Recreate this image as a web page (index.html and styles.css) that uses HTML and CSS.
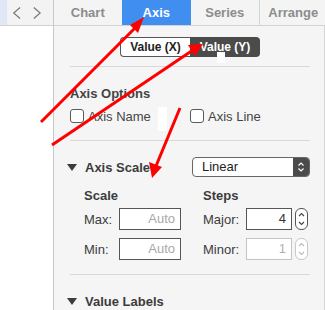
FILE: index.html
```html
<!DOCTYPE html>
<html>
<head>
<meta charset="utf-8">
<link rel="stylesheet" href="styles.css">
</head>
<body>
<div class="app">
  <aside class="sidebar">
    <div class="nav-bar">
      <span class="nav-strip"></span>
      <svg class="nav-btn" width="12" height="14" viewBox="0 0 12 14"><path d="M10 1 L3 7 L10 13" fill="none" stroke="#777" stroke-width="1.3"/></svg>
      <svg class="nav-btn" width="12" height="14" viewBox="0 0 12 14"><path d="M2 1 L9 7 L2 13" fill="none" stroke="#777" stroke-width="1.3"/></svg>
    </div>
  </aside>
  <main class="inspector">
    <nav class="tabs">
      <div class="tab">Chart</div>
      <div class="tab active">Axis</div>
      <div class="tab">Series</div>
      <div class="tab">Arrange</div>
    </nav>
    <div class="content">
      <div class="seg-wrap">
        <div class="segmented">
          <div class="seg seg-on">Value (X)</div>
          <div class="seg seg-off">Value (Y)</div>
        </div>
      </div>
      <div class="section options">
        <div class="heading">Axis Options</div>
        <div class="check-row">
          <label class="check"><span class="box"></span>Axis Name</label>
          <label class="check"><span class="box"></span>Axis Line</label>
        </div>
      </div>
      <div class="section scale">
        <div class="disclosure-row">
          <div class="disclosure"><span class="tri"></span>Axis Scale</div>
          <div class="popup">
            <span class="popup-text">Linear</span>
            <span class="popup-arrows">
              <svg width="8" height="12" viewBox="0 0 8 12"><path d="M1.5 4.5 L4 2 L6.5 4.5 M1.5 7.5 L4 10 L6.5 7.5" fill="none" stroke="#fff" stroke-width="1.2"/></svg>
            </span>
          </div>
        </div>
        <div class="fields">
          <div class="col col-scale">
            <div class="col-title">Scale</div>
            <div class="field"><span class="lbl">Max:</span><span class="input placeholder">Auto</span></div>
            <div class="field"><span class="lbl">Min:</span><span class="input placeholder">Auto</span></div>
          </div>
          <div class="col col-steps">
            <div class="col-title">Steps</div>
            <div class="field"><span class="lbl">Major:</span><span class="input">4</span>
              <span class="stepper"><svg width="9" height="20" viewBox="0 0 9 20"><path d="M2 7 L4.5 4.5 L7 7 M2 13 L4.5 15.5 L7 13" fill="none" stroke="#444" stroke-width="1.1"/></svg></span>
            </div>
            <div class="field disabled"><span class="lbl">Minor:</span><span class="input">1</span>
              <span class="stepper"><svg width="9" height="20" viewBox="0 0 9 20"><path d="M2 7 L4.5 4.5 L7 7 M2 13 L4.5 15.5 L7 13" fill="none" stroke="#bbb" stroke-width="1.1"/></svg></span>
            </div>
          </div>
        </div>
      </div>
      <div class="section labels">
        <div class="disclosure"><span class="tri"></span>Value Labels</div>
      </div>
    </div>
  </main>
</div>
<svg class="annotations" width="325" height="310" viewBox="0 0 325 310">
  <rect x="217" y="52" width="8" height="11" fill="#fff"/>
  <rect x="158" y="107" width="9" height="24" fill="#fff"/>
  <g stroke="#f00" stroke-width="3" stroke-linecap="butt" fill="#f00">
    <line x1="41" y1="122" x2="136" y2="27"/>
    <polygon points="144,17 130,25 138,33" stroke="none"/>
    <line x1="52" y1="145" x2="193" y2="50"/>
    <polygon points="203,44 188,45 195,56" stroke="none"/>
    <line x1="180" y1="108" x2="156" y2="166"/>
    <polygon points="152,178 149,162 162,167" stroke="none"/>
  </g>
</svg>
</body>
</html>
```
FILE: styles.css
```css
* { box-sizing: border-box; }
html, body { margin: 0; padding: 0; }
body {
  width: 325px;
  height: 310px;
  overflow: hidden;
  position: relative;
  font-family: "Liberation Sans", Arial, sans-serif;
  color: #3c3c3c;
  background: #fff;
}
.app { display: flex; height: 310px; }
.sidebar {
  width: 54px;
  flex: none;
  background: #fff;
  border-right: 1px solid #c8c8c8;
}
.nav-bar {
  height: 26px;
  display: flex;
  align-items: center;
  background: #f3f3f3;
  border-bottom: 1px solid #d2d2d2;
}
.nav-strip { width: 8px; height: 25px; background: #dfe8f4; margin-right: 4px; }
.nav-btn { margin: 0 10px 0 0; }
.inspector {
  flex: 1;
  display: flex;
  flex-direction: column;
  background: #f5f5f5;
}
.tabs {
  height: 26px;
  display: flex;
  background: #f4f4f4;
  border-bottom: 1px solid #d2d2d2;
}
.tab {
  flex: 1;
  display: flex;
  align-items: center;
  justify-content: center;
  font-size: 13px;
  font-weight: bold;
  color: #8c8c8c;
  border-left: 1px solid #d4d4d4;
}
.tab:first-child { border-left: none; }
.tab.active { background: #3f8ef0; color: #fff; border-left-color: #3f8ef0; }
.tab.active + .tab { border-left-color: #3f8ef0; }
.content {
  flex: 1;
  padding: 0 14px 0 16px;
  border-right: 1px solid #d6d6d6;
  margin-right: 2px;
}
.seg-wrap { display: flex; justify-content: center; padding: 11px 0 9px; border-bottom: 1px solid #d9d9d9; }
.segmented { display: flex; height: 20px; }
.seg {
  width: 70px;
  display: flex;
  align-items: center;
  justify-content: center;
  font-size: 12px;
  font-weight: bold;
}
.seg-on {
  background: #fff;
  color: #222;
  border: 1px solid #555;
  border-right: none;
  border-radius: 4px 0 0 4px;
}
.seg-off {
  background: #4b4b4b;
  color: #fff;
  border-radius: 0 4px 4px 0;
}
.section { border-bottom: 1px solid #d9d9d9; }
.options { padding: 19px 0 17px; }
.heading { font-size: 13px; font-weight: bold; color: #444; line-height: 15px; }
.check-row { display: flex; margin-top: 8px; height: 14px; align-items: center; }
.check { display: flex; align-items: center; font-size: 13px; color: #444; width: 120px; }
.box {
  width: 14px; height: 14px;
  border: 1px solid #5a5a5a;
  border-radius: 3px;
  background: #fff;
  margin-right: 4px;
}
.scale { padding: 16px 0 14px; }
.disclosure-row { display: flex; align-items: center; justify-content: space-between; height: 20px; }
.disclosure { display: flex; align-items: center; font-size: 13px; font-weight: bold; color: #3c3c3c; }
.tri {
  width: 0; height: 0;
  border-left: 5px solid transparent;
  border-right: 5px solid transparent;
  border-top: 7px solid #3c3c3c;
  margin: 0 8px 0 -3px;
}
.popup {
  width: 118px;
  height: 20px;
  display: flex;
  border: 1px solid #666;
  border-radius: 4px;
  background: #fff;
  overflow: hidden;
}
.popup-text { flex: 1; font-size: 13px; color: #222; padding-left: 9px; line-height: 18px; }
.popup-arrows { width: 16px; background: #4b4b4b; display: flex; align-items: center; justify-content: center; }
.fields { display: flex; padding-left: 14px; margin-top: 11px; }
.col-scale { width: 119px; }
.col-title { font-size: 13px; font-weight: bold; color: #3c3c3c; line-height: 16px; margin-bottom: 4px; }
.field { display: flex; align-items: center; height: 22px; margin-bottom: 8px; }
.field:last-child { margin-bottom: 0; }
.lbl { font-size: 13px; color: #3c3c3c; }
.col-scale .lbl { width: 35px; }
.col-steps .lbl { width: 43px; }
.input {
  height: 22px;
  border: 1px solid #555;
  background: #fff;
  font-size: 13px;
  text-align: right;
  padding-right: 5px;
  line-height: 20px;
  color: #333;
}
.col-scale .input { width: 62px; }
.col-steps .input { width: 46px; }
.placeholder { color: #a8a8a8; }
.stepper {
  width: 13px; height: 22px;
  margin-left: 3px;
  border: 1px solid #555;
  border-radius: 6px;
  background: #fff;
  display: flex; align-items: center; justify-content: center;
}
.disabled .lbl { color: #3c3c3c; }
.disabled .input { border-color: #c4c4c4; color: #b0b0b0; }
.disabled .stepper { border-color: #c8c8c8; }
.labels { border-bottom: none; padding-top: 19px; }
.annotations { position: absolute; left: 0; top: 0; pointer-events: none; }
```
